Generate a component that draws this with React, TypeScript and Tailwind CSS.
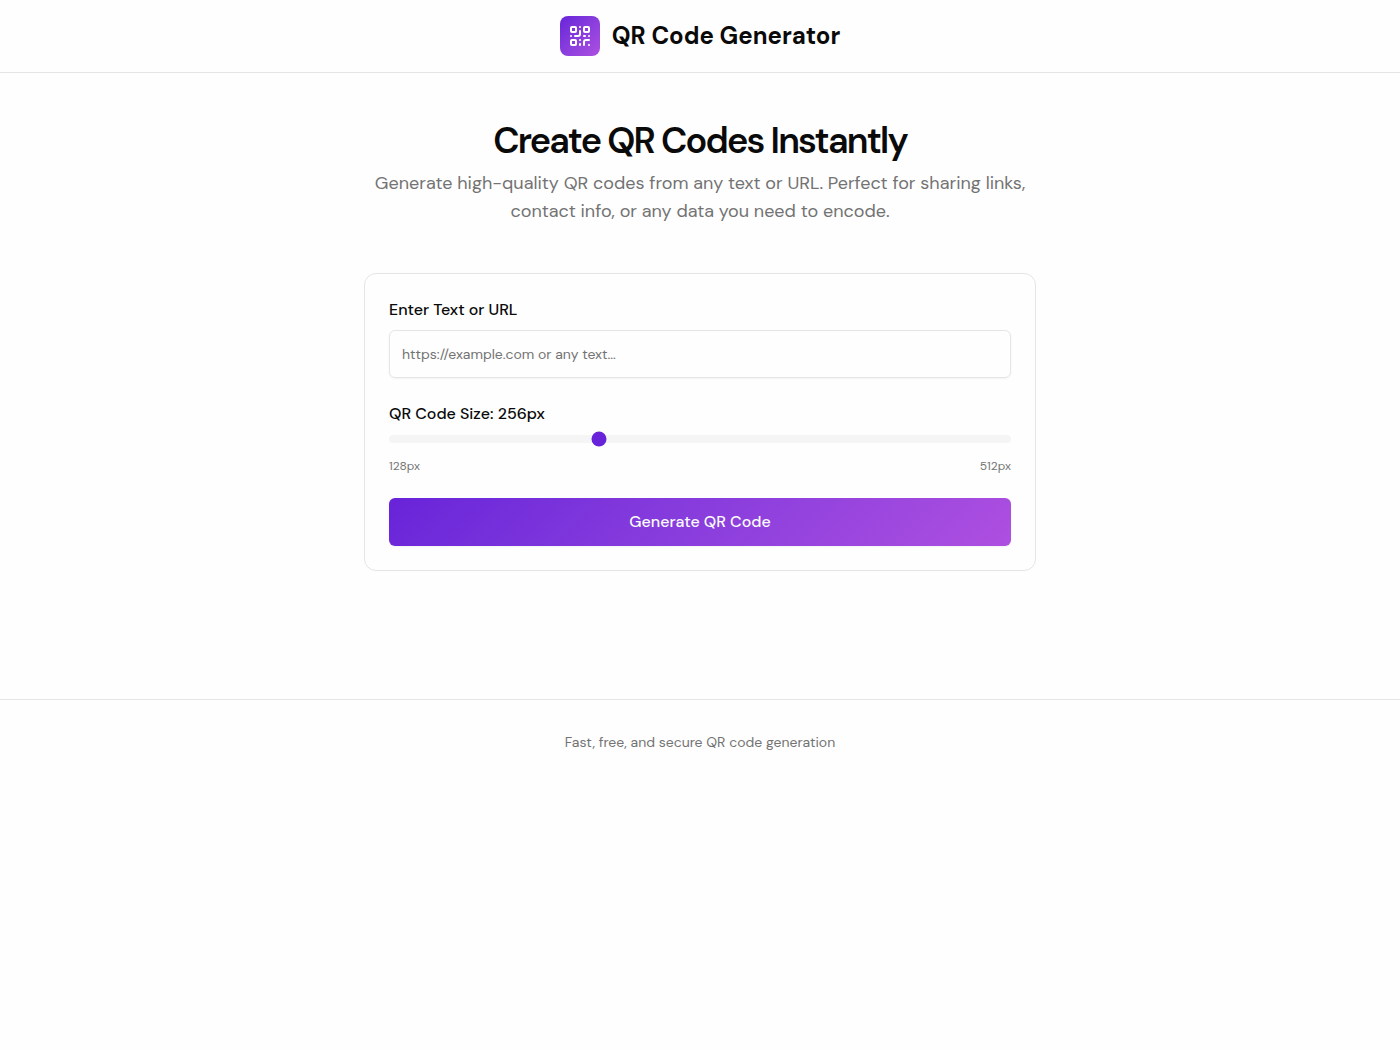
import { useState } from 'react';
import { QrCode } from 'lucide-react';

const MIN_SIZE = 128;
const MAX_SIZE = 512;

export default function App() {
  const [text, setText] = useState('');
  const [size, setSize] = useState(256);

  return (
    <div className="min-h-screen bg-[#fefefe] font-['DM_Sans','Open_Sans',sans-serif] text-neutral-950">
      {/* Header */}
      <header className="border-b border-neutral-200">
        <div className="flex items-center justify-center gap-3 px-4 py-4">
          <div className="flex h-10 w-10 items-center justify-center rounded-lg bg-linear-135 from-[#6823d9] to-[#ae4fe0]">
            <QrCode className="h-6 w-6 text-white" />
          </div>
          <span className="text-2xl font-bold">QR Code Generator</span>
        </div>
      </header>

      <main className="mx-auto max-w-2xl py-12">
        <div className="mb-12 text-center">
          <h1 className="mb-2 text-4xl font-semibold tracking-tighter">Create QR Codes Instantly</h1>
          <p className="text-lg text-neutral-500">
            Generate high-quality QR codes from any text or URL. Perfect for sharing links, contact info, or any data you need to encode.
          </p>
        </div>

        {/* Generator card */}
        <form
          onSubmit={(e) => e.preventDefault()}
          className="rounded-xl border border-neutral-200 p-6"
        >
          <label htmlFor="qr-text" className="block font-medium">Enter Text or URL</label>
          <input
            id="qr-text"
            type="text"
            value={text}
            onChange={(e) => setText(e.target.value)}
            placeholder="https://example.com or any text..."
            className="mt-2 h-12 w-full rounded-md border border-neutral-200 px-3 text-sm shadow-xs placeholder:text-neutral-500"
          />

          <label htmlFor="qr-size" className="mt-6 block font-medium">QR Code Size: {size}px</label>
          <div>
            <input
              id="qr-size"
              type="range"
              min={MIN_SIZE}
              max={MAX_SIZE}
              step="32"
              value={size}
              onChange={(e) => setSize(Number(e.target.value))}
              className="h-2 w-full cursor-pointer appearance-none rounded-lg bg-neutral-100 accent-[#6823d9]"
            />
          </div>
          <div className="mt-2 flex justify-between text-xs text-neutral-500">
            <span>{MIN_SIZE}px</span>
            <span>{MAX_SIZE}px</span>
          </div>

          <button
            type="submit"
            className="mt-6 h-12 w-full cursor-pointer rounded-md bg-linear-135 from-[#6823d9] to-[#ae4fe0] font-medium text-neutral-50 shadow-xs"
          >
            Generate QR Code
          </button>
        </form>
      </main>

      <footer className="mt-20 border-t border-neutral-200 py-8 text-center text-sm text-neutral-500">
        Fast, free, and secure QR code generation
      </footer>
    </div>
  );
}
